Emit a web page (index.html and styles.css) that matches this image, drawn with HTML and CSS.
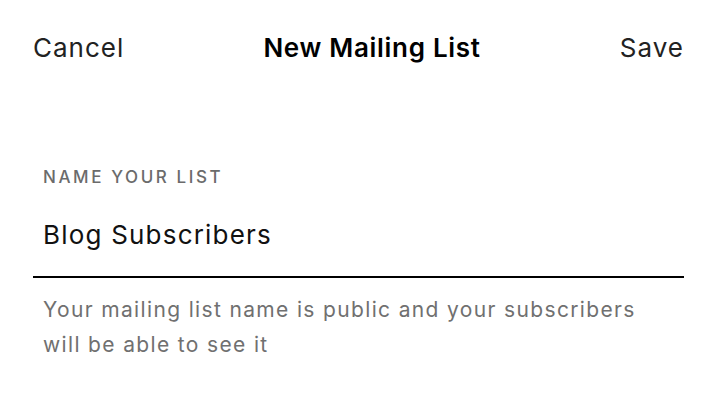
FILE: index.html
```html
<!DOCTYPE html>
<html lang="en">
<head>
    <meta charset="UTF-8">
    <meta name="viewport" content="width=device-width, initial-scale=1.0">
    <title>New Mailing List</title>
    <link rel="stylesheet" href="styles.css">
</head>
<body>
    <div class="sheet">
        <header class="topbar">
            <a href="#" class="action">Cancel</a>
            <h1>New Mailing List</h1>
            <a href="#" class="action">Save</a>
        </header>

        <form class="form">
            <label class="field">
                <span class="label">Name your list</span>
                <input type="text" class="input" value="Blog Subscribers">
            </label>
            <p class="hint">Your mailing list name is public and your subscribers will be able to see it</p>
        </form>
    </div>
</body>
</html>
```

FILE: styles.css
```css
* {
    margin: 0;
    padding: 0;
    box-sizing: border-box;
}

body {
    font-family: Inter, 'Noto Sans', sans-serif;
    background: #ffffff;
    color: #000000;
}

.sheet {
    width: 712px;
    height: 398px;
    padding: 0 28px 0 33px;
}

.topbar {
    height: 97px;
    display: flex;
    align-items: center;
    justify-content: space-between;
    padding-bottom: 2px;
}

.action {
    color: #222222;
    font-size: 26px;
    text-decoration: none;
    letter-spacing: 1px;
}

h1 {
    font-size: 26px;
    font-weight: 600;
    letter-spacing: 0.7px;
}

.form {
    padding-top: 70px;
}

.field {
    display: flex;
    flex-direction: column;
    border-bottom: 2px solid #000000;
}

.label {
    padding-left: 10px;
    font-size: 17px;
    font-weight: 500;
    letter-spacing: 2.6px;
    text-transform: uppercase;
    color: #6b6b6b;
}

.input {
    border: none;
    outline: none;
    font-family: inherit;
    font-size: 26px;
    color: #111111;
    padding: 32px 10px 26px;
    background: transparent;
    letter-spacing: 1.2px;
}

.hint {
    padding: 14px 40px 0 10px;
    font-size: 21px;
    line-height: 35px;
    color: #707070;
    letter-spacing: 1.35px;
}
```
